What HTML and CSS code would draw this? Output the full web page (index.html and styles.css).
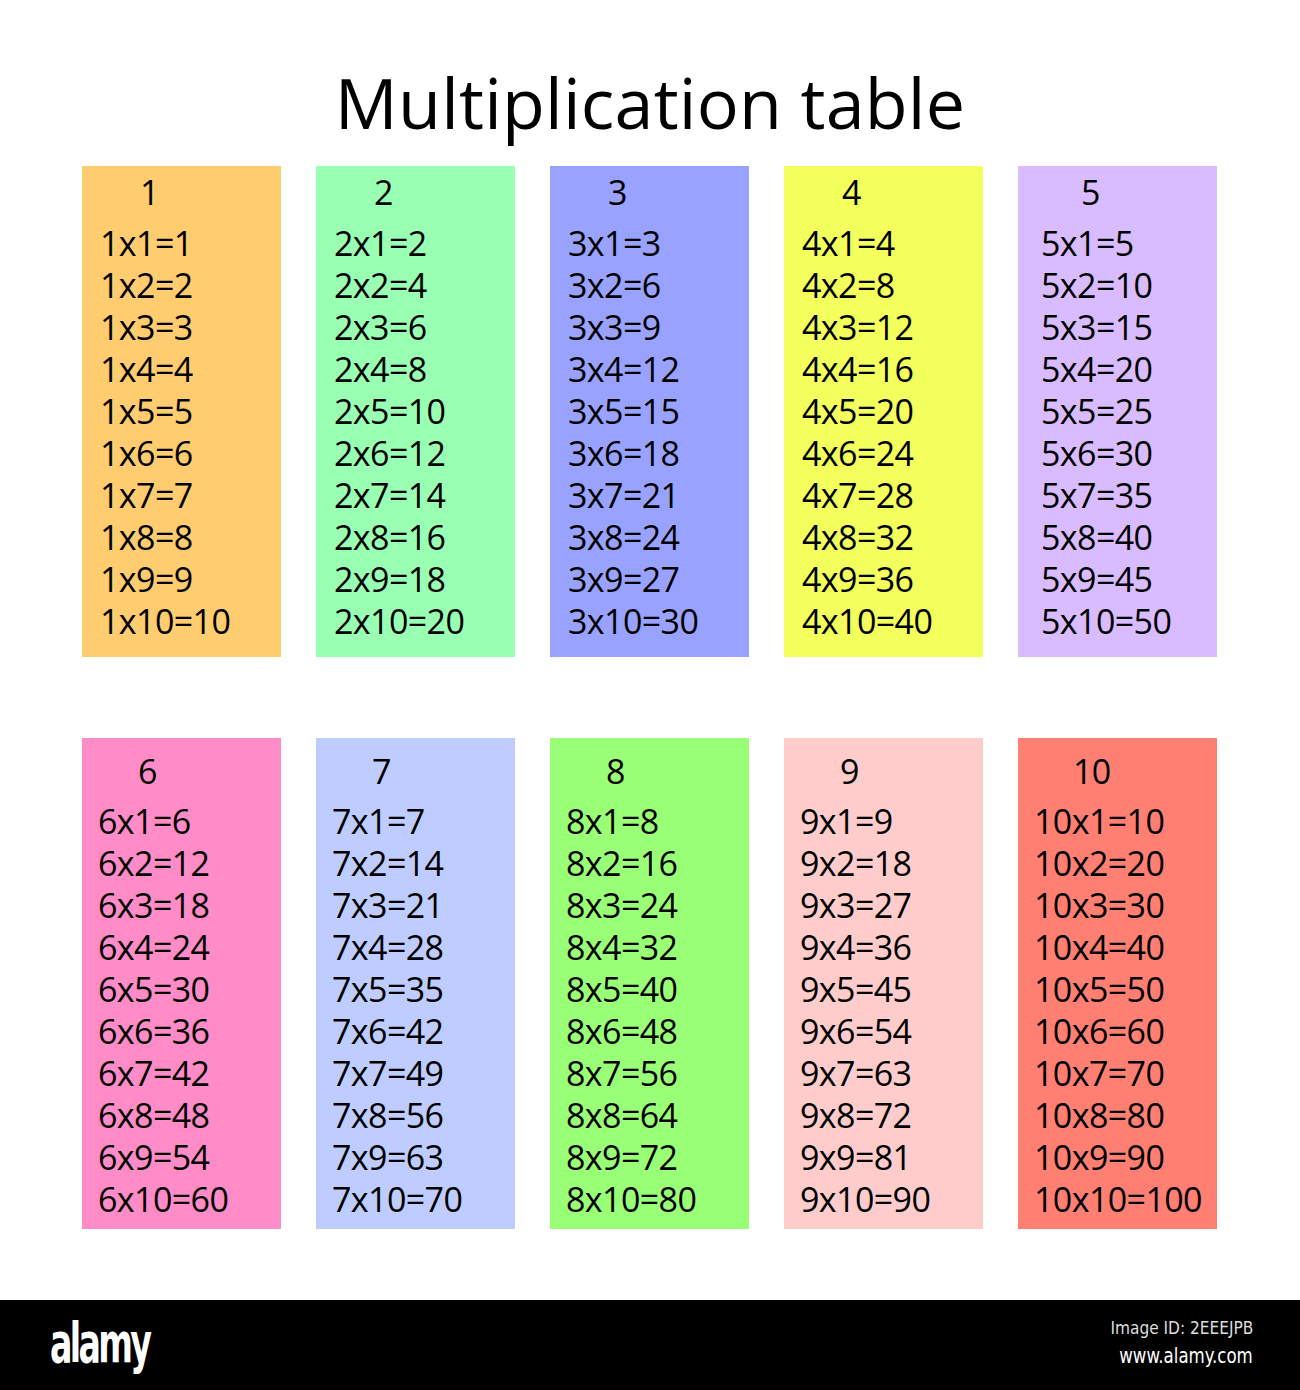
FILE: index.html
```html
<!DOCTYPE html>
<html>
<head>
<meta charset="utf-8">
<link rel="stylesheet" href="styles.css">
</head>
<body>
<div class="page">
  <h1 class="title">Multiplication table</h1>
  <div class="grid">
    <div class="card c1"><div class="head">1</div><div class="line">1x1=1</div><div class="line">1x2=2</div><div class="line">1x3=3</div><div class="line">1x4=4</div><div class="line">1x5=5</div><div class="line">1x6=6</div><div class="line">1x7=7</div><div class="line">1x8=8</div><div class="line">1x9=9</div><div class="line">1x10=10</div></div>
    <div class="card c2"><div class="head">2</div><div class="line">2x1=2</div><div class="line">2x2=4</div><div class="line">2x3=6</div><div class="line">2x4=8</div><div class="line">2x5=10</div><div class="line">2x6=12</div><div class="line">2x7=14</div><div class="line">2x8=16</div><div class="line">2x9=18</div><div class="line">2x10=20</div></div>
    <div class="card c3"><div class="head">3</div><div class="line">3x1=3</div><div class="line">3x2=6</div><div class="line">3x3=9</div><div class="line">3x4=12</div><div class="line">3x5=15</div><div class="line">3x6=18</div><div class="line">3x7=21</div><div class="line">3x8=24</div><div class="line">3x9=27</div><div class="line">3x10=30</div></div>
    <div class="card c4"><div class="head">4</div><div class="line">4x1=4</div><div class="line">4x2=8</div><div class="line">4x3=12</div><div class="line">4x4=16</div><div class="line">4x5=20</div><div class="line">4x6=24</div><div class="line">4x7=28</div><div class="line">4x8=32</div><div class="line">4x9=36</div><div class="line">4x10=40</div></div>
    <div class="card c5"><div class="head">5</div><div class="line">5x1=5</div><div class="line">5x2=10</div><div class="line">5x3=15</div><div class="line">5x4=20</div><div class="line">5x5=25</div><div class="line">5x6=30</div><div class="line">5x7=35</div><div class="line">5x8=40</div><div class="line">5x9=45</div><div class="line">5x10=50</div></div>
    <div class="card c6 low"><div class="head">6</div><div class="line">6x1=6</div><div class="line">6x2=12</div><div class="line">6x3=18</div><div class="line">6x4=24</div><div class="line">6x5=30</div><div class="line">6x6=36</div><div class="line">6x7=42</div><div class="line">6x8=48</div><div class="line">6x9=54</div><div class="line">6x10=60</div></div>
    <div class="card c7 low"><div class="head">7</div><div class="line">7x1=7</div><div class="line">7x2=14</div><div class="line">7x3=21</div><div class="line">7x4=28</div><div class="line">7x5=35</div><div class="line">7x6=42</div><div class="line">7x7=49</div><div class="line">7x8=56</div><div class="line">7x9=63</div><div class="line">7x10=70</div></div>
    <div class="card c8 low"><div class="head">8</div><div class="line">8x1=8</div><div class="line">8x2=16</div><div class="line">8x3=24</div><div class="line">8x4=32</div><div class="line">8x5=40</div><div class="line">8x6=48</div><div class="line">8x7=56</div><div class="line">8x8=64</div><div class="line">8x9=72</div><div class="line">8x10=80</div></div>
    <div class="card c9 low"><div class="head">9</div><div class="line">9x1=9</div><div class="line">9x2=18</div><div class="line">9x3=27</div><div class="line">9x4=36</div><div class="line">9x5=45</div><div class="line">9x6=54</div><div class="line">9x7=63</div><div class="line">9x8=72</div><div class="line">9x9=81</div><div class="line">9x10=90</div></div>
    <div class="card c10 low"><div class="head">10</div><div class="line">10x1=10</div><div class="line">10x2=20</div><div class="line">10x3=30</div><div class="line">10x4=40</div><div class="line">10x5=50</div><div class="line">10x6=60</div><div class="line">10x7=70</div><div class="line">10x8=80</div><div class="line">10x9=90</div><div class="line">10x10=100</div></div>
  </div>
</div>
<div class="footer">
  <div class="logo">alamy</div>
  <div class="meta">
    <div class="imgid">Image ID: 2EEEJPB</div>
    <div class="site">www.alamy.com</div>
  </div>
</div>
</body>
</html>
```

FILE: styles.css
```css
html, body {
  margin: 0;
  padding: 0;
  background: #ffffff;
}
body {
  width: 1300px;
  height: 1390px;
  overflow: hidden;
  font-family: "Open Sans", "DejaVu Sans", sans-serif;
  color: #000;
}
.page {
  height: 1300px;
  display: flex;
  flex-direction: column;
}
.title {
  margin: 52px 0 0 0;
  height: 114px;
  font-size: 70px;
  line-height: 100px;
  font-weight: 500;
  text-align: center;
  letter-spacing: 0.2px;
}
.grid {
  display: grid;
  grid-template-columns: repeat(5, 199px);
  grid-template-rows: 491px 491px;
  column-gap: 35px;
  row-gap: 81px;
  padding-left: 82px;
}
.card {
  padding: 5px 0 0 18px;
  font-size: 34px;
  line-height: 42px;
  letter-spacing: -0.6px;
  font-weight: 500;
}
.card.low {
  padding-top: 12px;
  padding-left: 16px;
}
.head {
  padding-left: 40px;
  margin-bottom: 9px;
}
.card.low .head {
  margin-bottom: 8px;
}
.line {
  white-space: nowrap;
}
.c1 { background: #ffcc70; }
.c2 { background: #99ffb3; }
.c3 { background: #99a3ff; }
.c4 { background: #f2ff5c; }
.c5 { background: #d9bbff; padding-left: 23px; }
.c6 { background: #ff8cc6; }
.c7 { background: #bfccff; }
.c8 { background: #99ff77; }
.c9 { background: #ffcccc; }
.c10 { background: #ff7f73; }
.c10 .head { padding-left: 39px; }

.footer {
  height: 90px;
  background: #000;
  display: flex;
  justify-content: space-between;
  align-items: center;
  padding: 0 47px 0 50px;
}
.logo {
  color: #fff;
  font-family: "DejaVu Sans Condensed", "DejaVu Sans", sans-serif;
  font-stretch: condensed;
  font-weight: 700;
  font-size: 56px;
  letter-spacing: -4px;
  line-height: 64px;
  transform: scaleX(0.66);
  transform-origin: left center;
  margin-top: -4px;
}
.meta {
  display: flex;
  flex-direction: column;
  align-items: flex-end;
  gap: 4px;
  margin-top: -4px;
}
.imgid {
  color: #dddddd;
  font-family: "DejaVu Sans Condensed", "DejaVu Sans", sans-serif;
  font-stretch: condensed;
  font-size: 18px;
  line-height: 22px;
  transform: scaleX(0.95);
  transform-origin: right center;
}
.site {
  color: #fff;
  font-family: "DejaVu Sans Condensed", "DejaVu Sans", sans-serif;
  font-stretch: condensed;
  font-size: 21px;
  font-weight: 400;
  line-height: 26px;
  transform: scaleX(0.88);
  transform-origin: right center;
}
```
